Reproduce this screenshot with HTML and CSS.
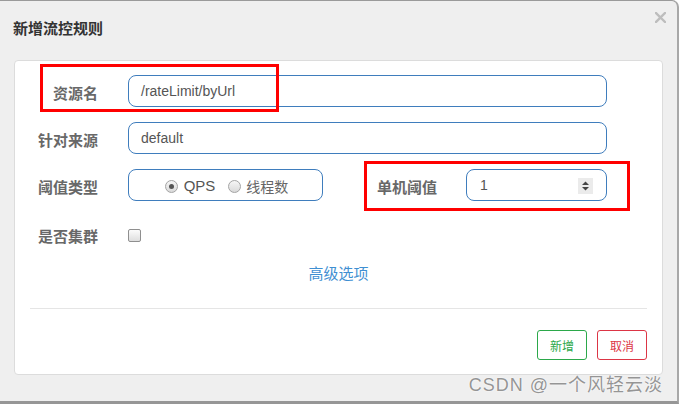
FILE: index.html
```html
<!DOCTYPE html>
<html lang="zh-CN">
<head>
<meta charset="utf-8">
<title>新增流控规则</title>
<link rel="stylesheet" href="styles.css">
</head>
<body>
<div class="modal">
  <div class="modal-header">
    <h4 class="title">新增流控规则</h4>
    <span class="close" aria-label="关闭">
      <svg width="11" height="11" viewBox="0 0 11 11"><path d="M1 1 L10 10 M10 1 L1 10" stroke="#bdbdbd" stroke-width="2.4" stroke-linecap="square"/></svg>
    </span>
  </div>
  <div class="panel">
    <div class="form-row">
      <label class="label">资源名</label>
      <div class="input wide">/rateLimit/byUrl</div>
    </div>
    <div class="form-row">
      <label class="label">针对来源</label>
      <div class="input wide">default</div>
    </div>
    <div class="form-row">
      <label class="label">阈值类型</label>
      <div class="input radios">
        <span class="radio checked"></span><span class="radio-text">QPS</span>
        <span class="radio"></span><span class="radio-text cjk">线程数</span>
      </div>
      <label class="label label-2">单机阈值</label>
      <div class="input number">
        <span>1</span>
        <span class="spin"><svg width="15" height="16" viewBox="0 0 15 16"><polygon points="4,7 7.5,3.5 11,7" fill="#444"/><polygon points="4,9 11,9 7.5,12.5" fill="#444"/></svg></span>
      </div>
    </div>
    <div class="form-row row-check">
      <label class="label">是否集群</label>
      <span class="checkbox"></span>
    </div>
    <div class="advanced"><a class="link">高级选项</a></div>
    <div class="divider"></div>
    <div class="footer">
      <button class="btn btn-ok">新增</button>
      <button class="btn btn-cancel">取消</button>
    </div>
  </div>
  <div class="mark mark-1"></div>
  <div class="mark mark-2"></div>
  <div class="watermark">CSDN @一个风轻云淡</div>
</div>
</body>
</html>
```
FILE: styles.css
```css
html, body {
  margin: 0;
  padding: 0;
}
body {
  width: 680px;
  height: 404px;
  overflow: hidden;
  background: #fff;
  font-family: "Noto Sans CJK SC", "Liberation Sans", sans-serif;
}
.modal {
  position: relative;
  box-sizing: border-box;
  width: 679px;
  height: 404px;
  background: #efefef;
  border-top: 1px solid #9a9a9a;
  border-right: 2px solid #a8a8a8;
  border-bottom: 3px solid #969696;
  border-top-right-radius: 7px;
  display: flex;
  flex-direction: column;
}
.modal-header {
  height: 59px;
  display: flex;
  justify-content: space-between;
  align-items: flex-start;
  padding: 0 11px 0 13px;
}
.title {
  margin: 17px 0 0;
  font-size: 15px;
  line-height: 20px;
  font-weight: 700;
  color: #333;
}
.close {
  margin-top: 11px;
  width: 11px;
  height: 11px;
  display: block;
}
.close svg { display: block; }
.panel {
  box-sizing: border-box;
  margin-left: 14px;
  width: 649px;
  background: #fff;
  border: 1px solid #dcdcdc;
  border-radius: 4px;
  padding: 14px 0 14px 0;
  display: flex;
  flex-direction: column;
}
.form-row {
  display: flex;
  align-items: center;
  height: 32px;
  margin-bottom: 15px;
}
.row-check {
  height: 36px;
  margin-bottom: 0;
}
.label {
  width: 83px;
  flex: none;
  text-align: right;
  font-size: 15px;
  font-weight: 700;
  color: #686868;
  line-height: 20px;
  margin-right: 30px;
  padding-top: 3px;
}
.label-2 {
  width: 114px;
  margin-right: 29px;
}
.input {
  box-sizing: border-box;
  height: 32px;
  border: 1px solid #3f7dbd;
  border-radius: 8px;
  display: flex;
  align-items: center;
  font-family: "Liberation Sans", "Noto Sans CJK SC", sans-serif;
  font-size: 14px;
  color: #555;
  padding: 0 12px;
  flex: none;
}
.wide { width: 479px; }
.radios {
  width: 195px;
  justify-content: center;
  padding: 0;
  padding-left: 2px;
}
.radio {
  box-sizing: border-box;
  width: 13px;
  height: 13px;
  border-radius: 50%;
  border: 1px solid #a4a4a4;
  background: linear-gradient(#f6f6f6, #d9d9d9);
  display: flex;
  align-items: center;
  justify-content: center;
  margin-top: 2px;
}
.radio.checked::after {
  content: "";
  width: 5px;
  height: 5px;
  border-radius: 50%;
  background: #555;
}
.radio-text {
  margin-left: 6px;
  margin-right: 13px;
  font-size: 15px;
  color: #555;
  padding-top: 1px;
}
.radio-text.cjk {
  margin-left: 5px;
  margin-right: 0;
  font-family: "Noto Sans CJK SC", sans-serif;
  font-size: 14px;
  color: #666;
}
.number {
  width: 141px;
  justify-content: space-between;
  padding: 0 13px 0 13px;
}
.spin {
  width: 15px;
  height: 16px;
  background: #ebebeb;
  display: block;
  margin-top: 1px;
}
.spin svg { display: block; }
.checkbox {
  box-sizing: border-box;
  width: 13px;
  height: 13px;
  border: 1px solid #8f8f8f;
  border-radius: 2px;
  background: linear-gradient(#fbfbfb, #dedede);
  margin-top: 2px;
}
.advanced {
  margin-top: 10px;
  height: 20px;
  text-align: center;
  line-height: 20px;
}
.link {
  font-size: 15px;
  color: #3f8fd2;
  cursor: pointer;
}
.divider {
  margin: 26px 15px 0;
  height: 0;
  border-top: 1px solid #e5e5e5;
}
.footer {
  margin-top: 21px;
  padding-right: 15px;
  display: flex;
  justify-content: flex-end;
  gap: 10px;
}
.btn {
  box-sizing: border-box;
  width: 50px;
  height: 30px;
  background: #fff;
  border: 1px solid;
  border-radius: 3px;
  font-family: "Noto Sans CJK SC", sans-serif;
  font-size: 12px;
  padding: 0;
}
.btn-ok { border-color: #2ba84a; color: #2ba84a; }
.btn-cancel { border-color: #dc3545; color: #dc3545; }
.mark {
  position: absolute;
  box-sizing: border-box;
  border: 3px solid #f00;
}
.mark-1 { left: 40px; top: 63px; width: 239px; height: 48px; }
.mark-2 { left: 364px; top: 160px; width: 266px; height: 50px; }
.watermark {
  position: absolute;
  right: 14px;
  top: 373px;
  font-family: "Liberation Sans", "Noto Sans CJK SC", sans-serif;
  font-size: 18px;
  line-height: 22px;
  letter-spacing: 1px;
  color: #959595;
  text-shadow: 0 0 2px #fff, 0 0 1px #fff;
  white-space: nowrap;
}
```
